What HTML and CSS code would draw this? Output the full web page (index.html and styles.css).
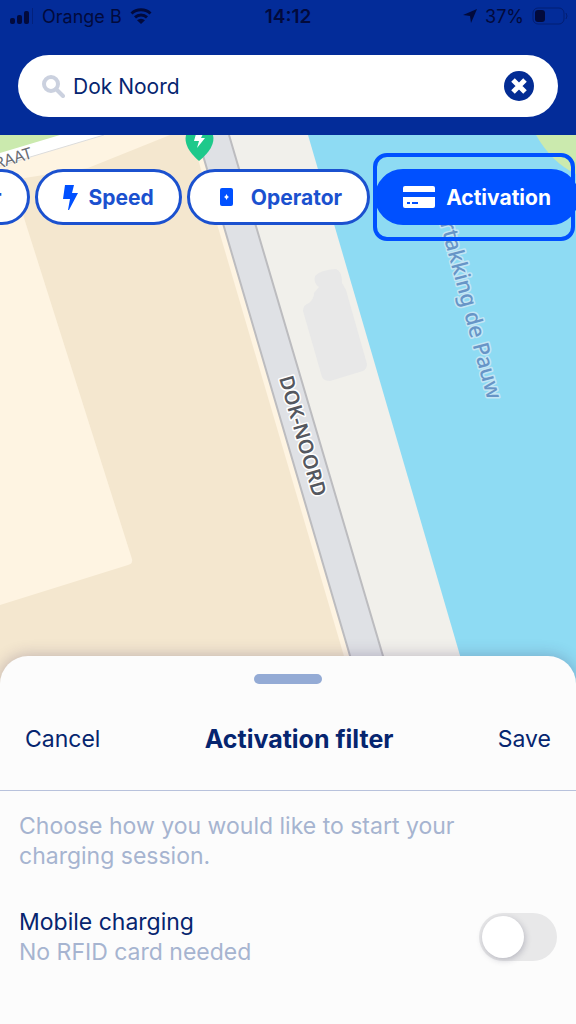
FILE: index.html
```
<!DOCTYPE html>
<html lang="en">

<head>
    <meta charset="UTF-8">
    <meta name="viewport" content="width=device-width, initial-scale=1.0">
    <title>Activation filter</title>
    <link rel="stylesheet" href="styles.css">
</head>

<body>
    <header class="header">
        <!-- Status bar -->
        <div class="status-bar">
            <div class="status-left">
                <svg width="24" height="16" viewBox="0 0 24 16" fill="currentColor">
                    <rect x="0" y="10" width="5" height="6" rx="2" />
                    <rect x="7" y="7" width="5" height="9" rx="2" />
                    <rect x="14" y="3" width="5" height="13" rx="2" />
                    <rect x="22" y="0" width="1" height="16" opacity="0.3" />
                </svg>
                <span>Orange B</span>
                <svg width="22" height="16" viewBox="0 0 22 16">
                    <path d="M1.500 5.500a14 14 0 0 1 19 0M5 9.300a9 9 0 0 1 12 0" fill="none" stroke="currentColor" stroke-width="3" />
                    <path d="M11 16L7 12.300a6 6 0 0 1 8 0z" fill="currentColor" />
                </svg>
            </div>
            <div class="status-time">14:12</div>
            <div class="status-right">
                <svg width="14" height="14" viewBox="0 0 14 14" fill="currentColor">
                    <path d="M14 0L8 14L7 7L0 6z" />
                </svg>
                <span>37%</span>
                <svg width="36" height="18" viewBox="0 0 36 18">
                    <rect x="1" y="1" width="31" height="16" rx="5" fill="none" stroke="currentColor" opacity="0.4" />
                    <rect x="3" y="3" width="10" height="12" rx="3" fill="currentColor" />
                    <path d="M34 6q2 3 0 6" fill="none" stroke="currentColor" opacity="0.4" />
                </svg>
            </div>
        </div>

        <!-- Search -->
        <form class="search">
            <svg width="23" height="23" viewBox="0 0 23 23" fill="none" stroke="#cbd1df">
                <circle cx="9" cy="9" r="7" stroke-width="4" />
                <path d="M14 14l7 7" stroke-width="4" stroke-linecap="round" />
            </svg>
            <input class="search-input" type="text" value="Dok Noord" aria-label="Search location">
            <button class="search-clear" type="button" aria-label="Clear search">
                <svg width="30" height="30" viewBox="0 0 30 30">
                    <circle cx="15" cy="15" r="15" fill="#032c94" />
                    <path d="M9 9l12 12M21 9l-12 12" stroke="#fff" stroke-width="5" />
                </svg>
            </button>
        </form>
    </header>

    <main class="map">
        <svg class="map-canvas" viewBox="0 135 576 551" preserveAspectRatio="xMinYMin slice">
            <rect x="0" y="135" width="576" height="560" fill="#f4e7cf" />
            <!-- Plots left of the street -->
            <path d="M0 135H170L88 168L12 180L132 559Q133 564 128 565L0 605z" fill="#fef4e2" />
            <path d="M0 135H104L0 166z" fill="#fff" />
            <path d="M104 135L0 166" stroke="#dcdcdc" stroke-width="1" />
            <path d="M0 135H60L0 153z" fill="#cbeaae" />
            <!-- Street, quay and water -->
            <path d="M194 135L360 700" stroke="#fef4e2" stroke-width="6" />
            <path d="M229 135H310L476 700H396z" fill="#f1f0eb" />
            <path d="M308 135H576V700H473z" fill="#8edbf3" />
            <path d="M197 135H229L396 700H363z" fill="#dfe1e5" />
            <path d="M197 135L363 700M229 135L396 700" fill="none" stroke="#bcbcbf" stroke-width="2" />
            <path d="M536 135H576V174Q552 163 536 135z" fill="#cbeaae" />
            <path d="M315 276Q320 270 336 269Q342 271 342 283L346 290L367 364Q367 369 363 371L330 381Q324 381 322 377L303 311Q303 305 309 303Q314 299 314 293L319 287Q313 283 315 276z" fill="#e8e8e8" />
            <!-- Labels -->
            <text class="map-label street-label" transform="translate(33 158) rotate(-17)" font-size="16" text-anchor="end">RAAT</text>
            <text class="map-label road-label" transform="translate(279 378) rotate(74)" font-size="20">DOK-NOORD</text>
            <text class="map-label water-label" transform="translate(440 223) rotate(75)" font-size="22">rtakking de Pauw</text>
            <!-- Charge point -->
            <path d="M186 135H213Q216 147 199 161Q183 147 186 135z" fill="#1ec98b" />
            <path d="M196 134H203L201 138H205L197 148L199 141H194z" fill="#fff" />
        </svg>

        <nav class="chips" aria-label="Filters">
            <button class="chip" type="button">r</button>
            <button class="chip" type="button">
                <svg width="15" height="25" viewBox="0 0 15 25" fill="#0050ff">
                    <path d="M2 0H11L9 8H15L6 25H5L7 14H0z" />
                </svg>
                Speed
            </button>
            <button class="chip" type="button">
                <svg width="25" height="18" viewBox="0 0 25 18">
                    <rect x="5" y="0" width="13" height="18" rx="2" fill="#0050ff" />
                    <path d="M11.500 6L12.500 8L14 9L12.500 10L11.500 12L10.500 10L9 9L10.500 8z" fill="#fff" />
                </svg>
                Operator
            </button>
            <button class="chip chip-active" type="button">
                <svg width="32" height="22" viewBox="0 0 32 22">
                    <rect width="32" height="22" rx="2" fill="#fff" />
                    <path d="M0 6H32V11H0z" fill="#0050ff" />
                    <path d="M4 17H7M9 17H15" stroke="#0050ff" stroke-width="2" />
                </svg>
                Activation
            </button>
        </nav>
        <div class="highlight"></div>
    </main>

    <!-- Bottom sheet -->
    <section class="sheet">
        <div class="sheet-handle"></div>
        <div class="sheet-header">
            <button class="sheet-action" type="button">Cancel</button>
            <h1 class="sheet-title">Activation filter</h1>
            <button class="sheet-action" type="button">Save</button>
        </div>
        <div class="sheet-body">
            <p class="sheet-intro">Choose how you would like to start your charging session.</p>
            <div class="option">
                <label class="option-label" for="mobile-charging">
                    Mobile charging
                    <span class="option-hint">No RFID card needed</span>
                </label>
                <input class="toggle" type="checkbox" id="mobile-charging">
            </div>
        </div>
    </section>
</body>

</html>
```
FILE: styles.css
```
* {
    box-sizing: border-box;
}

body {
    margin: 0;
    min-height: 100vh;
    display: flex;
    flex-direction: column;
    font-family: Inter, "Liberation Sans", sans-serif;
    color: #06256f;
    overflow-x: hidden;
}

button,
input {
    font-family: inherit;
    color: inherit;
}

button {
    background: none;
    border: none;
    padding: 0;
    cursor: pointer;
}

svg {
    flex-shrink: 0;
}

/* Header */
.header {
    background: #032c99;
    padding: 0 18px 18px;
}

.status-bar {
    display: grid;
    grid-template-columns: 1fr auto 1fr;
    align-items: center;
    height: 32px;
    margin: 0 -10px 23px;
    font-size: 18px;
    color: #020a3c;
}

.status-left,
.status-right {
    display: flex;
    align-items: center;
    gap: 8px;
}

.status-left {
    padding-left: 2px;
}

.status-right {
    justify-content: flex-end;
}

.status-time {
    font-size: 19px;
    font-weight: 600;
}

.search {
    display: flex;
    align-items: center;
    gap: 8px;
    height: 62px;
    padding: 0 24px;
    background: #fff;
    border-radius: 31px;
}

.search-input {
    flex: 1;
    min-width: 0;
    padding: 0;
    border: none;
    outline: none;
    font-size: 21px;
}

.search-clear {
    display: flex;
}

/* Map */
.map {
    position: relative;
    flex: 1;
    min-height: 240px;
    margin-bottom: -30px;
    overflow: hidden;
}

.map-canvas {
    position: absolute;
    width: 100%;
    height: 100%;
}

.map-label {
    font-family: "Noto Sans", sans-serif;
    font-weight: 500;
    stroke: #fff;
    stroke-width: 3px;
    stroke-linejoin: round;
    paint-order: stroke;
}

.street-label {
    fill: #6a6d74;
    font-weight: 400;
    stroke-width: 1px;
}

.road-label {
    fill: #55585f;
    font-weight: 600;
}

.water-label {
    fill: #6795c7;
    stroke: #c4e6f5;
}

.chips {
    position: relative;
    display: flex;
    gap: 5px;
    margin: 34px 0 0 -35px;
}

.chip {
    display: flex;
    flex-shrink: 0;
    align-items: center;
    gap: 11px;
    height: 56px;
    padding: 0 25px;
    border: 3px solid #1b51cf;
    border-radius: 28px;
    background: #fff;
    color: #1b51cf;
    font-size: 21px;
    font-weight: 700;
}

.chip-active {
    background: #0050ff;
    border-color: #0050ff;
    color: #fff;
}

.highlight {
    position: absolute;
    top: 18px;
    right: 1px;
    width: 202px;
    height: 88px;
    border: 4px solid #0050ff;
    border-radius: 14px;
    pointer-events: none;
}

/* Bottom sheet */
.sheet {
    position: relative;
    min-height: 368px;
    padding-top: 18px;
    background: #fcfcfc;
    border-radius: 28px 28px 0 0;
    box-shadow: 0 0 16px rgba(60, 40, 90, 0.3);
}

.sheet-handle {
    width: 68px;
    height: 10px;
    margin: 0 auto;
    border-radius: 5px;
    background: #94abd5;
}

.sheet-header {
    display: flex;
    align-items: center;
    justify-content: space-between;
    height: 107px;
    padding: 4px 25px 0;
    border-bottom: 1px solid #b8c2dc;
}

.sheet-title {
    margin: 0;
    font-size: 25px;
    font-weight: 700;
}

.sheet-action {
    font-size: 23px;
}

.sheet-body {
    padding: 20px 19px;
    font-size: 23px;
    line-height: 30px;
}

.sheet-intro {
    margin: 0 0 36px;
    padding-right: 25px;
    color: #a6b4d0;
}

.option {
    display: flex;
    align-items: center;
    justify-content: space-between;
}

.option-hint {
    display: block;
    color: #a6b4d0;
}

.toggle {
    appearance: none;
    display: flex;
    width: 78px;
    height: 48px;
    margin: 0;
    padding: 3px;
    border-radius: 24px;
    background: #e8e8e9;
    cursor: pointer;
}

.toggle::before {
    content: "";
    width: 42px;
    height: 42px;
    border-radius: 50%;
    background: #fff;
    box-shadow: 1px 2px 6px rgba(40, 40, 70, 0.25);
}

.toggle:checked {
    background: #0050ff;
    justify-content: flex-end;
}
```
